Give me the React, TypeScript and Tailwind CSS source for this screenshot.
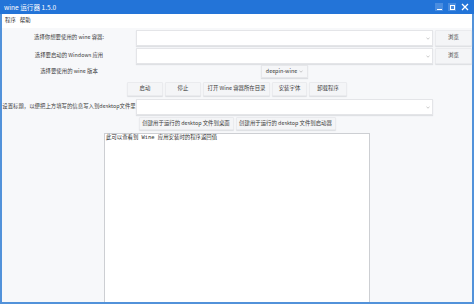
import React from "react";

const FONT = { fontFamily: '"Noto Sans CJK SC", "Noto Sans", sans-serif' };

function Chevron() {
  return (
    <svg width="4" height="3" viewBox="0 0 4 3" className="shrink-0">
      <path d="M0.5 0.8 L2 2.2 L3.5 0.8" fill="none" stroke="#a5a5a5" strokeWidth="0.6" />
    </svg>
  );
}

function Btn({ w, children }: { w: string; children: React.ReactNode }) {
  return (
    <div
      className={`${w} h-full flex items-center justify-center bg-[#f4f5f7] border border-[#eaebee] rounded-[1px] shadow-[0_1px_1px_#dcdee2] text-[#3a3a3a] whitespace-nowrap`}
    >
      {children}
    </div>
  );
}

function Combo({ w }: { w: string }) {
  return (
    <div className={`${w} h-full bg-white border border-[#e4e5e8] shadow-[0_1px_1px_#dfe1e4] flex items-center justify-end pr-[2px]`}>
      <Chevron />
    </div>
  );
}

export default function App() {
  return (
    <div className="w-[474px] h-[304px] flex flex-col bg-[#5292da] overflow-hidden text-[5.4px] leading-none" style={FONT}>
      {/* title bar */}
      <div className="h-[14px] shrink-0 bg-[#2374d8] flex items-center pl-[4px] pr-[5px] text-white">
        <span className="text-[6.6px]">wine 运行器 1.5.0</span>
        <div className="ml-auto flex items-center gap-[5px]">
          <div className="w-[8px] h-[8px] bg-[#4a8de0] flex items-end justify-center pb-[1px]">
            <div className="w-[5px] h-[1px] bg-white" />
          </div>
          <div className="w-[8px] h-[8px] bg-[#4a8de0] flex items-center justify-center">
            <div className="w-[5px] h-[5px] border border-white" />
          </div>
          <svg width="8" height="8" viewBox="0 0 8 8">
            <path d="M1 1 L7 7 M7 1 L1 7" stroke="white" strokeWidth="1.3" />
          </svg>
        </div>
      </div>

      {/* window body */}
      <div className="flex-1 mx-[2px] mb-[2px] flex flex-col bg-[#f7f8fa] min-h-0">
        {/* menu */}
        <div className="h-[14px] shrink-0 bg-white flex items-center gap-[4px] pl-[3px] text-[#2a2a2a]">
          <span>程序</span>
          <span>帮助</span>
        </div>

        <div className="flex-1 flex flex-col pt-[2px] min-h-0 text-[#3c3c3c]">
          {/* row 1 */}
          <div className="h-[16px] flex items-stretch">
            <div className="w-[134px] flex items-center justify-center">选择你想要使用的 wine 容器:</div>
            <Combo w="w-[297px]" />
            <div className="w-[2px]" />
            <Btn w="w-[37px]">浏览</Btn>
          </div>
          {/* row 2 */}
          <div className="h-[16px] mt-[2px] flex items-stretch">
            <div className="w-[134px] flex items-center justify-center">选择要启动的 Windows 应用</div>
            <Combo w="w-[297px]" />
            <div className="w-[2px]" />
            <Btn w="w-[37px]">浏览</Btn>
          </div>
          {/* row 3 */}
          <div className="h-[13px] mt-[1px] flex items-stretch">
            <div className="w-[134px] flex items-center justify-center">选择要使用的 wine 版本</div>
            <div className="w-[297px] flex justify-center">
              <div className="w-[47px] h-full bg-[#f5f6f8] border border-[#e6e7ea] shadow-[0_1px_1px_#dcdee2] flex items-center justify-center gap-[2px] text-[#3a3a3a]">
                <span>deepin-wine</span>
                <Chevron />
              </div>
            </div>
          </div>
          {/* row 4 */}
          <div className="h-[14px] mt-[4px] flex justify-center gap-[2px]">
            <Btn w="w-[36px]">启动</Btn>
            <Btn w="w-[36px]">停止</Btn>
            <Btn w="w-[67px]">打开 Wine 容器所在目录</Btn>
            <Btn w="w-[35px]">安装字体</Btn>
            <Btn w="w-[38px]">卸载程序</Btn>
          </div>
          {/* row 5 */}
          <div className="h-[16px] mt-[3px] flex items-stretch">
            <div className="w-[134px] flex items-center justify-center whitespace-nowrap">设置标题，以便把上方填写的信息写入到desktop文件里</div>
            <Combo w="w-[297px]" />
          </div>
          {/* row 6 */}
          <div className="h-[13px] mt-[2px] flex justify-center gap-[2px]">
            <Btn w="w-[95px]">创建用于运行的 desktop 文件到桌面</Btn>
            <Btn w="w-[100px]">创建用于运行的 desktop 文件到启动器</Btn>
          </div>
          {/* output */}
          <div className="flex-1 mt-[3px] flex justify-center min-h-0">
            <div
              className="w-[266px] h-full bg-white border border-[#cdcfd3] border-b-0 px-[1px] pt-[1px] text-[#2a2a2a] whitespace-nowrap"
              style={{ fontFamily: '"DejaVu Sans Mono", "Noto Sans CJK SC", monospace' }}
            >
              此可以查看到 Wine 应用安装时的程序返回值
            </div>
          </div>
        </div>
      </div>
    </div>
  );
}
